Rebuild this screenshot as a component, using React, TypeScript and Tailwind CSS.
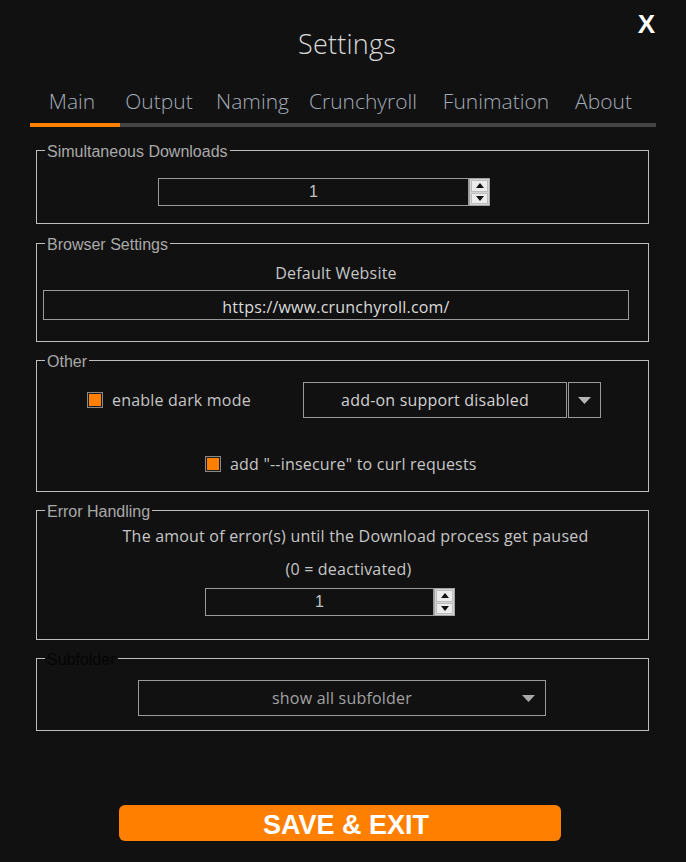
import React from "react";

const tabs: { label: string; cls: string }[] = [
  { label: "Main", cls: "w-[84px]" },
  { label: "Output", cls: "w-[90px]" },
  { label: "Naming", cls: "w-[97px]" },
  { label: "Crunchyroll", cls: "w-[124px]" },
  { label: "Funimation", cls: "w-[142px]" },
  { label: "About", cls: "w-[73px]" },
];

function Legend({ text, dark }: { text: string; dark?: boolean }) {
  return (
    <span
      className={
        "absolute -top-[7px] left-[8px] bg-[#111111] px-[2px] font-['Liberation_Sans',Arial,sans-serif] text-[16px] leading-[16px] " +
        (dark ? "text-[#050505]" : "text-[#a9a9a9]")
      }
    >
      {text}
    </span>
  );
}

function Spinner() {
  return (
    <div className="flex h-[28px] w-[21px] flex-col gap-[1px] border border-[#a3a3a3] bg-[#d4d4d4] p-[1px]">
      <div className="flex flex-1 items-center justify-center border border-[#bdbdbd] bg-[#ececec]">
        <svg width="8" height="5" viewBox="0 0 8 5">
          <polygon points="0,5 8,5 4,0" fill="#111" />
        </svg>
      </div>
      <div className="flex flex-1 items-center justify-center border border-[#bdbdbd] bg-[#ececec]">
        <svg width="8" height="5" viewBox="0 0 8 5">
          <polygon points="0,0 8,0 4,5" fill="#111" />
        </svg>
      </div>
    </div>
  );
}

function Checkbox() {
  return (
    <div className="flex h-[16px] w-[16px] shrink-0 items-center justify-center border border-[#8a8a8a] bg-[#1b1b1b] p-[1px]">
      <div className="h-full w-full bg-[#ff8000]" />
    </div>
  );
}

export default function App() {
  return (
    <div className="relative flex h-[862px] w-[686px] flex-col bg-[#111111] font-['Open_Sans',sans-serif]">
      <button className="absolute right-[31px] top-[11px] font-['Liberation_Sans',Arial,sans-serif] text-[26px] font-bold leading-[26px] text-white">
        X
      </button>

      <div className="mt-[28px] h-[32px] pl-[8px] text-center text-[27px] font-light leading-[32px] tracking-[0.2px] text-[#d9d9d9]">
        Settings
      </div>

      <div className="ml-[30px] mt-[28px] flex h-[28px]">
        {tabs.map((t) => (
          <div
            key={t.label}
            className={t.cls + " text-center text-[21px] font-light leading-[26px] text-[#a2abb6]"}
          >
            {t.label}
          </div>
        ))}
      </div>

      <div className="ml-[30px] mt-[7px] flex h-[4px] w-[626px] bg-[#444444]">
        <div className="h-full w-[90px] bg-[#ff8000]" />
      </div>

      {/* Simultaneous Downloads */}
      <div className="relative ml-[36px] mt-[23px] w-[613px] border border-[#bdbdbd] pb-[17px] pl-[121px] pt-[27px]">
        <Legend text="Simultaneous Downloads" />
        <div className="flex">
          <div className="flex h-[28px] w-[311px] items-center justify-center border border-[#9a9a9a] font-['Liberation_Sans',Arial,sans-serif] text-[16px] text-[#c2c2c2]">
            1
          </div>
          <Spinner />
        </div>
      </div>

      {/* Browser Settings */}
      <div className="relative ml-[36px] mt-[19px] w-[613px] border border-[#bdbdbd] pb-[21px] pl-[6px] pt-[19px]">
        <Legend text="Browser Settings" />
        <div className="h-[20px] w-[586px] text-center text-[16px] leading-[20px] tracking-[0.2px] text-[#c6c6c6]">
          Default Website
        </div>
        <div className="mt-[7px] flex h-[30px] w-[586px] items-center justify-center border border-[#9a9a9a] pt-[3px] text-[16px] tracking-[0.2px] text-[#dcdcdc]">
          https://www.crunchyroll.com/
        </div>
      </div>

      {/* Other */}
      <div className="relative ml-[36px] mt-[18px] w-[613px] border border-[#bdbdbd] pb-[17px] pt-[21px]">
        <Legend text="Other" />
        <div className="flex h-[36px] items-center pl-[50px]">
          <div className="flex w-[216px] items-center">
            <Checkbox />
            <span className="ml-[9px] text-[16px] leading-[20px] tracking-[0.2px] text-[#c6c6c6]">enable dark mode</span>
          </div>
          <div className="flex h-[36px] w-[264px] items-center justify-center border border-[#9a9a9a] text-[16px] tracking-[0.2px] text-[#d2d2d2]">
            add-on support disabled
          </div>
          <div className="ml-[1px] flex h-[36px] w-[33px] items-center justify-center border border-[#9a9a9a]">
            <svg width="13" height="7" viewBox="0 0 13 7">
              <polygon points="0,0 13,0 6.5,7" fill="#b5b5b5" />
            </svg>
          </div>
        </div>
        <div className="mt-[36px] flex h-[20px] items-center pl-[168px]">
          <Checkbox />
          <span className="ml-[9px] text-[16px] leading-[20px] tracking-[0.2px] text-[#c6c6c6]">
            add "--insecure" to curl requests
          </span>
        </div>
      </div>

      {/* Error Handling */}
      <div className="relative ml-[36px] mt-[18px] w-[613px] border border-[#bdbdbd] pb-[23px] pt-[15px]">
        <Legend text="Error Handling" />
        <div className="h-[20px] pl-[26px] text-center text-[16px] leading-[20px] tracking-[0.2px] text-[#c6c6c6]">
          The amout of error(s) until the Download process get paused
        </div>
        <div className="mt-[13px] h-[20px] pl-[12px] text-center text-[16px] leading-[20px] tracking-[0.2px] text-[#c6c6c6]">
          (0 = deactivated)
        </div>
        <div className="mt-[9px] flex pl-[168px]">
          <div className="flex h-[28px] w-[229px] items-center justify-center border border-[#9a9a9a] font-['Liberation_Sans',Arial,sans-serif] text-[16px] text-[#c2c2c2]">
            1
          </div>
          <Spinner />
        </div>
      </div>

      {/* Subfolder */}
      <div className="relative ml-[36px] mt-[18px] w-[613px] border border-[#bdbdbd] pb-[14px] pl-[101px] pt-[21px]">
        <Legend text="Subfolder" dark />
        <div className="relative flex h-[36px] w-[408px] items-center justify-center border border-[#9a9a9a] text-[16px] tracking-[0.2px] text-[#a3a3a3]">
          show all subfolder
          <svg className="absolute right-[10px] top-[14px]" width="13" height="7" viewBox="0 0 13 7">
            <polygon points="0,0 13,0 6.5,7" fill="#a9a9a9" />
          </svg>
        </div>
      </div>

      <button className="ml-[119px] mt-[74px] flex h-[36px] w-[442px] items-center justify-center rounded-[6px] bg-[#ff8000] pl-[12px] pt-[4px] font-['Liberation_Sans',Arial,sans-serif] text-[27px] font-bold leading-[30px] text-white">
        SAVE &amp; EXIT
      </button>
    </div>
  );
}
